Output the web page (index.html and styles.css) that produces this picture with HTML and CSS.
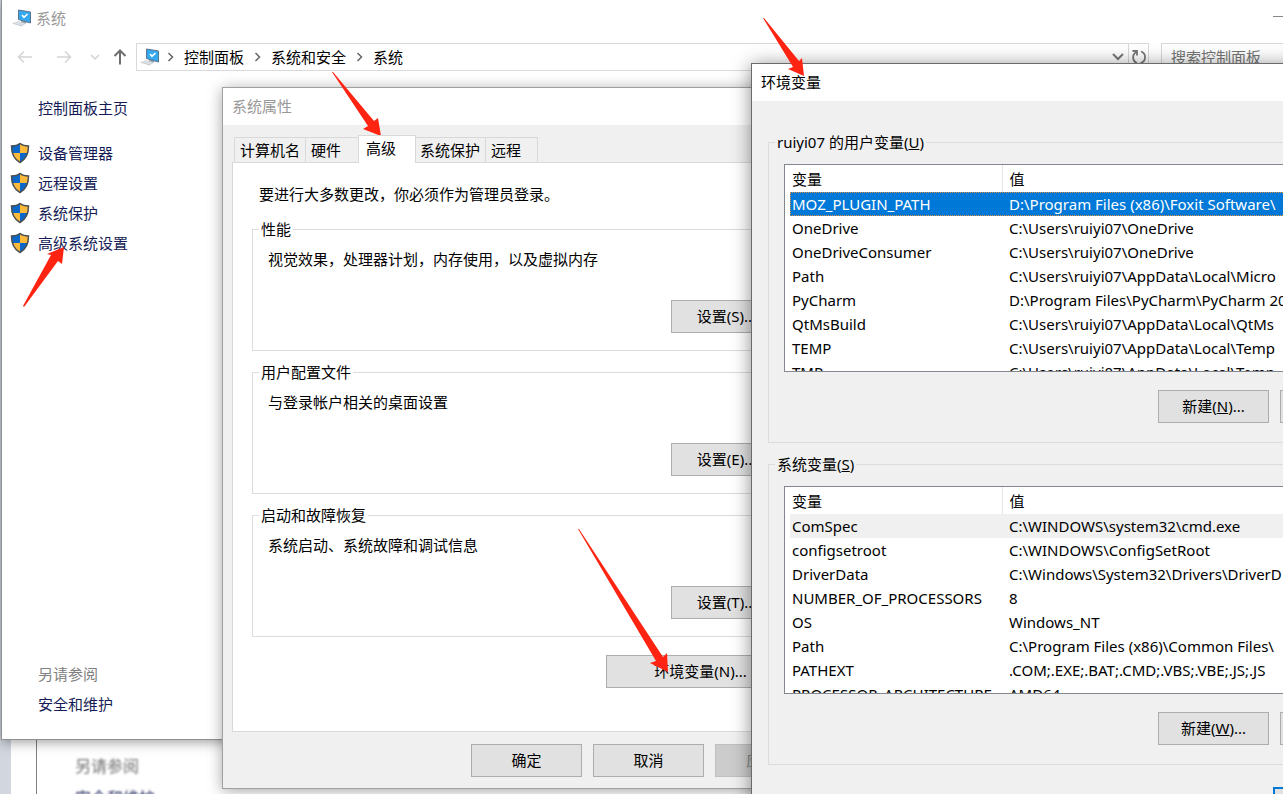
FILE: index.html
```html
<!DOCTYPE html>
<html lang="zh-CN">
<head>
  <meta charset="UTF-8" />
  <meta name="viewport" content="width=device-width, initial-scale=1.0"/>
  <title>系统</title>
  <link rel="stylesheet" href="styles.css">
</head>
<body>
  <svg class="sprite" aria-hidden="true">
    <symbol id="shield" viewBox="0 0 20 22">
      <clipPath id="shieldClip"><path d="M10 1.5 C7.5 3.5 4.5 4 1.5 4 C1.5 12 3.5 17 10 20.5 C16.5 17 18.5 12 18.5 4 C15.5 4 12.5 3.5 10 1.5 Z"/></clipPath>
      <g clip-path="url(#shieldClip)">
        <rect width="10" height="11" fill="#0b67c8"/>
        <rect x="10" width="10" height="11" fill="#fdb93a"/>
        <rect y="11" width="10" height="11" fill="#fdb93a"/>
        <rect x="10" y="11" width="10" height="11" fill="#0b67c8"/>
      </g>
      <path d="M10 1.5 C7.5 3.5 4.5 4 1.5 4 C1.5 12 3.5 17 10 20.5 C16.5 17 18.5 12 18.5 4 C15.5 4 12.5 3.5 10 1.5 Z" fill="none" stroke="#4a4f55" stroke-width="1.5"/>
    </symbol>
    <symbol id="computer" viewBox="0 0 20 18">
      <path d="M10 11.5 L15 12.8 L13 15 L8 13.5 Z" fill="#9aa7b1"/>
      <path d="M6.5 1 L18.5 3 V14 L6.5 10.5 Z" fill="#35a8f2" stroke="#5a7488" stroke-width="1"/>
      <path d="M10 6 L12 8.3 L15.5 5" fill="none" stroke="#fff" stroke-width="1.6"/>
      <path d="M0 14.5 L6 12.3 L14 14.5 L9.5 17.5 Z" fill="#c6ced5"/>
      <path d="M3 14 L10.5 16 M5 13.2 L12 15" stroke="#eef1f3" stroke-width="0.7"/>
    </symbol>
    <symbol id="chevron" viewBox="0 0 8 10">
      <path d="M2 1 L6 5 L2 9" fill="none" stroke="#666" stroke-width="1.5"/>
    </symbol>
  </svg>

  <div class="desktop">
    <div class="page-behind">
      <div class="page-inner">
        <p class="behind-label">另请参阅</p>
        <p class="behind-link">安全和维护</p>
      </div>
    </div>

    <!-- control panel window -->
    <section class="window system-window">
      <header class="system-title">
        <svg class="icon-computer"><use href="#computer"/></svg>
        <h1>系统</h1>
        <button class="minimize" aria-label="最小化"></button>
      </header>
      <div class="nav-row">
        <button class="nav-btn" aria-label="后退"><svg width="16" height="14" viewBox="0 0 16 14"><path d="M15 7 H1.5 M7 1.5 L1.5 7 L7 12.5" fill="none" stroke="#d4d4d4" stroke-width="1.5"/></svg></button>
        <button class="nav-btn" aria-label="前进"><svg width="16" height="14" viewBox="0 0 16 14"><path d="M1 7 H14.5 M9 1.5 L14.5 7 L9 12.5" fill="none" stroke="#d4d4d4" stroke-width="1.5"/></svg></button>
        <button class="nav-btn recent" aria-label="最近"><svg width="10" height="8" viewBox="0 0 10 8"><path d="M1 2 L5 6 L9 2" fill="none" stroke="#d4d4d4" stroke-width="1.5"/></svg></button>
        <button class="nav-btn up" aria-label="向上"><svg width="14" height="16" viewBox="0 0 14 16"><path d="M7 15.5 V2 M1.5 7 L7 1.5 L12.5 7" fill="none" stroke="#6e6e6e" stroke-width="2"/></svg></button>
        <nav class="address">
          <svg class="icon-computer"><use href="#computer"/></svg>
          <svg class="sep"><use href="#chevron"/></svg>
          <a href="#">控制面板</a>
          <svg class="sep"><use href="#chevron"/></svg>
          <a href="#">系统和安全</a>
          <svg class="sep"><use href="#chevron"/></svg>
          <a href="#">系统</a>
          <button class="history" aria-label="历史"><svg width="12" height="8" viewBox="0 0 12 8"><path d="M1 1 L6 6 L11 1" fill="none" stroke="#777" stroke-width="2"/></svg></button>
          <button class="refresh" aria-label="刷新"><svg width="16" height="16" viewBox="0 0 16 16"><path d="M5.5 3 A6 6 0 0 0 6 14 M10 2.5 A6 6 0 0 1 9.5 14 M1.5 2 H6 V6.5" fill="none" stroke="#777" stroke-width="1.8"/></svg></button>
        </nav>
        <input class="search" type="search" placeholder="搜索控制面板" aria-label="搜索控制面板">
      </div>
      <aside class="sidebar">
        <a class="home" href="#">控制面板主页</a>
        <ul class="tasks">
          <li><svg><use href="#shield"/></svg><a href="#">设备管理器</a></li>
          <li><svg><use href="#shield"/></svg><a href="#">远程设置</a></li>
          <li><svg><use href="#shield"/></svg><a href="#">系统保护</a></li>
          <li><svg><use href="#shield"/></svg><a href="#">高级系统设置</a></li>
        </ul>
        <div class="see-also">
          <p>另请参阅</p>
          <a href="#">安全和维护</a>
        </div>
      </aside>
    </section>

    <!-- system properties -->
    <section class="window props-window">
      <h2 class="props-title">系统属性</h2>
      <div class="props-body">
        <div class="tabs">
          <button class="tab">计算机名</button>
          <button class="tab tab-short">硬件</button>
          <button class="tab tab-short active">高级</button>
          <button class="tab">系统保护</button>
          <button class="tab tab-short">远程</button>
        </div>
        <div class="tab-panel">
          <p class="note">要进行大多数更改，你必须作为管理员登录。</p>
          <fieldset class="group">
            <legend>性能</legend>
            <p>视觉效果，处理器计划，内存使用，以及虚拟内存</p>
            <button class="btn">设置(S)...</button>
          </fieldset>
          <fieldset class="group">
            <legend>用户配置文件</legend>
            <p>与登录帐户相关的桌面设置</p>
            <button class="btn">设置(E)...</button>
          </fieldset>
          <fieldset class="group">
            <legend>启动和故障恢复</legend>
            <p>系统启动、系统故障和调试信息</p>
            <button class="btn">设置(T)...</button>
          </fieldset>
          <button class="btn env-btn">环境变量(N)...</button>
        </div>
        <div class="actions">
          <button class="btn">确定</button>
          <button class="btn">取消</button>
          <button class="btn" disabled>应用(A)</button>
        </div>
      </div>
    </section>

    <!-- environment variables -->
    <section class="window env-window">
      <h2 class="env-title">环境变量</h2>
      <div class="env-body">
        <fieldset class="var-group">
          <legend>ruiyi07 的用户变量(<u>U</u>)</legend>
          <div class="list">
            <table>
              <thead><tr><th>变量</th><th>值</th></tr></thead>
              <tbody>
                <tr class="selected"><td>MOZ_PLUGIN_PATH</td><td>D:\Program Files (x86)\Foxit Software\</td></tr>
                <tr><td>OneDrive</td><td>C:\Users\ruiyi07\OneDrive</td></tr>
                <tr><td>OneDriveConsumer</td><td>C:\Users\ruiyi07\OneDrive</td></tr>
                <tr><td>Path</td><td>C:\Users\ruiyi07\AppData\Local\Micro</td></tr>
                <tr><td>PyCharm</td><td>D:\Program Files\PyCharm\PyCharm 20</td></tr>
                <tr><td>QtMsBuild</td><td>C:\Users\ruiyi07\AppData\Local\QtMs</td></tr>
                <tr><td>TEMP</td><td>C:\Users\ruiyi07\AppData\Local\Temp</td></tr>
                <tr><td>TMP</td><td>C:\Users\ruiyi07\AppData\Local\Temp</td></tr>
              </tbody>
            </table>
          </div>
          <div class="var-actions">
            <button class="btn">新建(<u>N</u>)...</button>
            <button class="btn">编辑(<u>E</u>)...</button>
            <button class="btn">删除(<u>D</u>)</button>
          </div>
        </fieldset>
        <fieldset class="var-group">
          <legend>系统变量(<u>S</u>)</legend>
          <div class="list">
            <table>
              <thead><tr><th>变量</th><th>值</th></tr></thead>
              <tbody>
                <tr class="inactive"><td>ComSpec</td><td>C:\WINDOWS\system32\cmd.exe</td></tr>
                <tr><td>configsetroot</td><td>C:\WINDOWS\ConfigSetRoot</td></tr>
                <tr><td>DriverData</td><td>C:\Windows\System32\Drivers\DriverD</td></tr>
                <tr><td>NUMBER_OF_PROCESSORS</td><td>8</td></tr>
                <tr><td>OS</td><td>Windows_NT</td></tr>
                <tr><td>Path</td><td>C:\Program Files (x86)\Common Files\</td></tr>
                <tr><td>PATHEXT</td><td>.COM;.EXE;.BAT;.CMD;.VBS;.VBE;.JS;.JS</td></tr>
                <tr><td>PROCESSOR_ARCHITECTURE</td><td>AMD64</td></tr>
              </tbody>
            </table>
          </div>
          <div class="var-actions">
            <button class="btn">新建(<u>W</u>)...</button>
            <button class="btn">编辑(<u>I</u>)...</button>
            <button class="btn">删除(<u>L</u>)</button>
          </div>
        </fieldset>
        <div class="actions">
          <button class="btn default">确定</button>
          <button class="btn">取消</button>
        </div>
      </div>
    </section>

    <!-- red arrows -->
    <svg class="arrows" width="1283" height="794" aria-hidden="true">
      <polygon points="332,72 333,72 374,121 378,118 381,136 363,129 368,126"/>
      <polygon points="763,18 764,18 799,61 802,58 804,76 788,69 793,67"/>
      <polygon points="578,529 579,529 663,657 667,653 668,672 650,663 656,661"/>
      <polygon points="24,307 23,306 51,255 47,254 64,247 62,264 58,261"/>
    </svg>
  </div>
</body>
</html>
```
FILE: styles.css
```css
* {
  margin: 0;
  padding: 0;
  box-sizing: border-box;
}

body {
  background: #fff;
  color: #000;
  font-family: "Noto Sans", "Noto Sans CJK SC", sans-serif;
  font-size: 15px;
  line-height: 20px;
}

button,
input {
  font: inherit;
  color: inherit;
}

a {
  color: inherit;
  text-decoration: none;
}

fieldset {
  min-width: 0;
  border: 1px solid #dcdcdc;
}

.sprite {
  position: absolute;
  width: 0;
  height: 0;
}

.desktop {
  position: relative;
  height: 100vh;
  overflow: hidden;
  background: #b9bfca;
}

.window {
  position: absolute;
}

/* page under the windows */
.page-behind {
  position: absolute;
  top: 0;
  left: 0;
  right: 0;
  bottom: 0;
  display: flex;
  align-items: flex-end;
  border-left: 11px solid #d2d7df;
  background: #fff;
}

.page-inner {
  margin-left: 25px;
  padding-left: 38px;
  height: 56px;
  border-left: 1px solid #808080;
  font-size: 16px;
  white-space: nowrap;
}

.page-inner p {
  padding-top: 18px;
  filter: blur(1px);
}

.behind-label {
  color: #707070;
}

.page-inner .behind-link {
  padding-top: 12px;
  color: #151c55;
}

/* control panel */
.system-window {
  top: 0;
  left: 1px;
  right: -160px;
  min-height: 740px;
  display: flex;
  flex-direction: column;
  background: #fff;
  border: 1px solid #8c9296;
  border-top: none;
  box-shadow: 0 2px 12px rgba(0, 0, 0, 0.4);
}

.icon-computer {
  width: 20px;
  height: 18px;
}

.system-title {
  display: flex;
  align-items: center;
  gap: 4px;
  height: 36px;
  padding-left: 10px;
  color: #999;
}

.system-title h1 {
  flex: 1;
  font-size: 15px;
  font-weight: 400;
}

.minimize {
  width: 169px;
  height: 1px;
  margin-bottom: 4px;
  border: none;
  background: linear-gradient(to right, #888 15px, transparent 15px);
}

.nav-row {
  display: flex;
  align-items: center;
  height: 42px;
}

.nav-btn {
  display: flex;
  justify-content: center;
  align-items: center;
  width: 38px;
  height: 28px;
  margin-left: 1px;
  border: none;
  background: none;
}

.nav-btn:first-child {
  margin-left: 4px;
}

.nav-btn.recent {
  width: 21px;
}

.nav-btn.up {
  width: 28px;
  margin-right: 2px;
}

.address {
  flex: 1;
  display: flex;
  align-items: center;
  height: 28px;
  padding-left: 3px;
  border: 1px solid #d9d9d9;
}

.address .icon-computer {
  margin-right: -3px;
}

.sep {
  width: 9px;
  height: 10px;
  margin: 0 9px;
}

.history,
.refresh {
  display: flex;
  justify-content: center;
  align-items: center;
  width: 20px;
  height: 100%;
  border: none;
  background: none;
}

.history {
  margin-left: auto;
}

.refresh {
  border-left: 1px solid #d9d9d9;
}

.search {
  width: 269px;
  height: 28px;
  margin: 0 12px;
  padding: 0 9px;
  border: 1px solid #d9d9d9;
  background: #fff;
}

.search::placeholder {
  color: #757575;
}

.sidebar {
  flex: 1;
  display: flex;
  flex-direction: column;
  width: 220px;
  padding: 20px 0 25px 36px;
  color: #151c55;
}

.tasks {
  margin-top: 20px;
  list-style: none;
}

.tasks li {
  display: flex;
  align-items: center;
  gap: 8px;
  height: 30px;
  margin-left: -28px;
}

.tasks svg {
  width: 20px;
  height: 22px;
}

.see-also {
  margin-top: auto;
}

.see-also p {
  margin-bottom: 10px;
  color: #808080;
}

/* shared button */
.btn {
  width: 111px;
  height: 33px;
  padding-bottom: 2px;
  background: #e1e1e1;
  border: 1px solid #adadad;
  white-space: nowrap;
}

.btn:hover {
  background: #e5f1fb;
  border-color: #0078d7;
}

.btn:disabled {
  background: #ccc;
  border-color: #bfbfbf;
  color: #838383;
}

.btn.default {
  border: 2px solid #0078d7;
}

.actions {
  display: flex;
  justify-content: flex-end;
  gap: 11px;
}

/* system properties */
.props-window {
  top: 87px;
  left: 222px;
  width: 614px;
  background: #f0f0f0;
  border: 1px solid #a0a0a0;
  box-shadow: 0 2px 14px rgba(0, 0, 0, 0.35);
}

.props-title,
.env-title {
  padding: 8px 9px 9px;
  background: #fff;
  font-size: 15px;
  font-weight: 400;
}

.props-title {
  color: #999;
}

.props-body {
  padding: 10px 9px 11px;
}

.tabs {
  display: flex;
  align-items: flex-end;
  padding-left: 2px;
}

.tab {
  height: 25px;
  padding: 0 5px;
  background: #f0f0f0;
  border: 1px solid #d9d9d9;
  border-bottom: none;
  border-right: none;
  text-align: left;
  white-space: nowrap;
}

.tab-short {
  width: 53px;
}

.tab:last-child {
  border-right: 1px solid #d9d9d9;
}

.tab.active {
  z-index: 1;
  width: 58px;
  height: 28px;
  margin-bottom: -1px;
  padding: 0 7px 3px;
  background: #fff;
  border-right: 1px solid #d9d9d9;
}

.tab.active + .tab {
  padding: 0 5px 0 4px;
  border-left: none;
}

.tab-panel {
  padding: 21px 19px 43px;
  background: #fff;
  border: 1px solid #d9d9d9;
}

.note {
  padding-left: 7px;
  margin-bottom: 15px;
}

.group {
  display: flex;
  flex-direction: column;
  height: 132px;
  margin-bottom: 11px;
  padding: 10px 23px 17px 15px;
}

.group legend {
  margin-left: -9px;
  padding: 0 2px;
}

.group .btn {
  margin-top: auto;
  margin-left: auto;
}

.env-btn {
  display: block;
  width: 189px;
  margin: 18px 11px 0 auto;
}

.props-body .actions {
  margin-top: 12px;
}

/* environment variables */
.env-window {
  top: 63px;
  left: 751px;
  width: 795px;
  background: #f0f0f0;
  border: 1px solid #6b6b6b;
  box-shadow: 0 2px 18px rgba(0, 0, 0, 0.45);
}

.env-body {
  padding: 31px 16px 16px;
}

.var-group {
  margin-bottom: 11px;
  padding: 12px 15px 19px;
}

.var-group legend {
  margin-left: -9px;
  padding: 0 2px;
}

.list {
  height: 208px;
  overflow: hidden;
  padding: 0 5px 2px;
  background: #fff;
  border: 1px solid #828790;
}

.list table {
  width: 100%;
  table-layout: fixed;
  border-collapse: collapse;
}

.list th,
.list td {
  height: 24px;
  padding: 0 2px;
  font-weight: 400;
  text-align: left;
  white-space: nowrap;
}

.list th {
  height: 27px;
}

.list th:first-child {
  width: 212px;
  border-right: 1px solid #e5e5e5;
}

.list th + th,
.list td + td {
  padding-left: 7px;
}

.selected {
  background: #0078d7;
  color: #fff;
  outline: 1px dotted #e0913f;
  outline-offset: -1px;
}

.inactive {
  background: #f0f0f0;
}

.var-actions {
  display: flex;
  justify-content: flex-end;
  gap: 11px;
  margin-top: 18px;
}

.env-body .actions {
  padding-top: 11px;
  padding-right: 23px;
}

/* pointers drawn over the windows */
.arrows {
  position: absolute;
  top: 0;
  left: 0;
  fill: #ff2412;
  pointer-events: none;
}
```
